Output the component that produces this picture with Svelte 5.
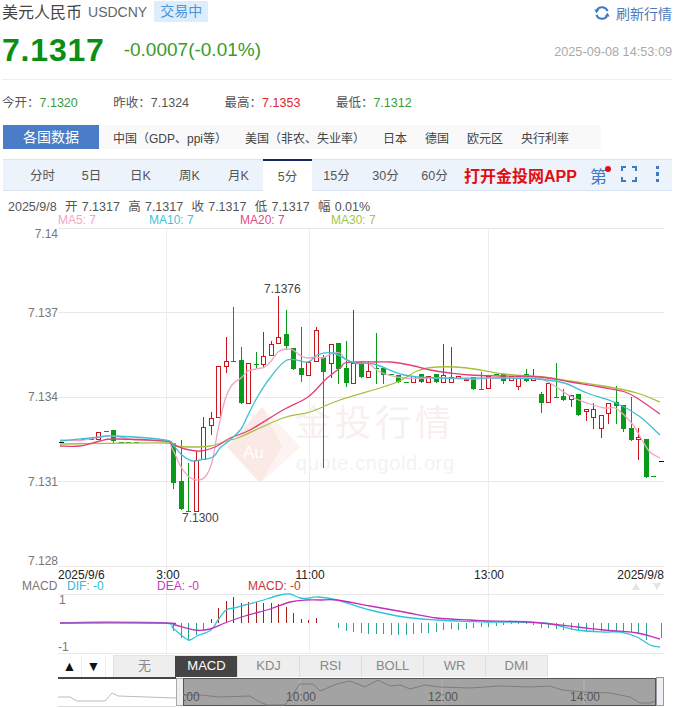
<script lang="ts">
  const stats = [
    { label: '今开', value: '7.1320', tone: 'down' },
    { label: '昨收', value: '7.1324', tone: 'flat' },
    { label: '最高', value: '7.1353', tone: 'up' },
    { label: '最低', value: '7.1312', tone: 'down' }
  ];
  const regions = ['中国（GDP、ppi等）', '美国（非农、失业率）', '日本', '德国', '欧元区', '央行利率'];
  const periods = ['分时', '5日', '日K', '周K', '月K', '5分', '15分', '30分', '60分'];
  const indicators = ['无', 'MACD', 'KDJ', 'RSI', 'BOLL', 'WR', 'DMI'];
  const legend = [
    { text: 'MA5: 7', color: '#f2a5c5' },
    { text: 'MA10: 7', color: '#3fc4dc' },
    { text: 'MA20: 7', color: '#e8488a' },
    { text: 'MA30: 7', color: '#a5c63b' }
  ];

  const barX = (i: number) => Math.round(60.5 + 7.5 * i);

  // [index, kind, body top, body bottom, wick top, wick bottom]
  const bars: [number, string, number, number, number, number][] = [
    [0, 'k', 442, 442, 442, 442], [3, 'd', 439, 439, 439, 439], [4, 'd', 439, 439, 439, 439],
    [5, 'r', 432, 439, 432, 439], [6, 'd', 431, 431, 431, 431], [7, 'g', 430, 441, 430, 442],
    [8, 'd', 442, 442, 442, 442], [9, 'd', 442, 442, 442, 442], [10, 'd', 442, 442, 442, 442],
    [15, 'g', 443, 483, 443, 488], [16, 'g', 481, 509, 440, 509], [17, 'g', 511, 511, 463, 511],
    [18, 'r', 460, 511, 451, 511], [19, 'r', 427, 459, 417, 459], [20, 'r', 418, 425, 412, 434],
    [21, 'r', 366, 417, 366, 417], [22, 'r', 361, 366, 337, 372], [23, 'g', 361, 361, 307, 361],
    [24, 'g', 360, 403, 347, 403], [25, 'r', 363, 403, 363, 403], [26, 'g', 364, 364, 352, 367],
    [27, 'r', 356, 364, 332, 367], [28, 'r', 344, 355, 341, 355], [29, 'r', 337, 343, 296, 343],
    [30, 'g', 334, 346, 310, 349], [31, 'g', 348, 369, 348, 369], [32, 'g', 368, 375, 327, 381],
    [33, 'r', 362, 375, 362, 375], [34, 'r', 330, 361, 327, 361], [35, 'g', 357, 372, 355, 467],
    [36, 'r', 344, 363, 344, 377], [37, 'g', 343, 369, 343, 383], [38, 'g', 368, 383, 341, 386],
    [39, 'r', 363, 383, 310, 383], [40, 'g', 363, 377, 361, 377], [41, 'r', 371, 377, 361, 377],
    [42, 'g', 368, 368, 333, 383], [43, 'g', 368, 375, 368, 383], [44, 'd', 374, 374, 374, 374],
    [45, 'g', 375, 382, 375, 382], [46, 'd', 382, 382, 382, 382], [47, 'r', 376, 382, 376, 382],
    [48, 'g', 374, 382, 374, 382], [49, 'r', 376, 382, 376, 382], [50, 'g', 374, 382, 374, 382],
    [51, 'r', 375, 382, 344, 382], [52, 'r', 377, 382, 347, 382], [53, 'r', 376, 378, 376, 378],
    [54, 'r', 379, 380, 379, 380], [55, 'g', 377, 389, 377, 389], [56, 'g', 389, 389, 372, 389],
    [57, 'r', 376, 388, 376, 388], [58, 'd', 374, 374, 374, 374], [59, 'g', 374, 381, 374, 383],
    [60, 'r', 376, 380, 376, 380], [61, 'r', 376, 386, 376, 389], [62, 'g', 374, 381, 369, 381],
    [63, 'r', 376, 380, 369, 380], [64, 'g', 394, 403, 392, 412], [65, 'r', 383, 402, 383, 402],
    [66, 'g', 397, 397, 363, 397], [67, 'g', 396, 400, 389, 400], [68, 'r', 395, 399, 395, 406],
    [69, 'g', 394, 415, 394, 415], [70, 'r', 409, 411, 409, 420], [71, 'r', 409, 417, 403, 428],
    [72, 'r', 415, 428, 415, 437], [73, 'r', 403, 413, 403, 423], [74, 'g', 402, 406, 386, 423],
    [75, 'g', 405, 429, 405, 431], [76, 'g', 428, 440, 397, 440], [77, 'r', 437, 439, 428, 459],
    [78, 'g', 439, 477, 439, 477], [79, 'g', 476, 476, 476, 476], [80, 'k', 461, 461, 461, 461]
  ];

  const pts = (list: number[][]) => list.map((p) => p.join(',')).join(' ');

  // catmull-rom through the sampled points, the lines in the chart are curved
  function smooth(list: number[][]): string {
    let d = `M${list[0][0]} ${list[0][1]}`;
    for (let i = 0; i < list.length - 1; i++) {
      const a = list[Math.max(i - 1, 0)];
      const b = list[i];
      const c = list[i + 1];
      const e = list[Math.min(i + 2, list.length - 1)];
      const c1 = [b[0] + (c[0] - a[0]) / 6, b[1] + (c[1] - a[1]) / 6];
      const c2 = [c[0] - (e[0] - b[0]) / 6, c[1] - (e[1] - b[1]) / 6];
      d += `C${c1[0].toFixed(1)} ${c1[1].toFixed(1)} ${c2[0].toFixed(1)} ${c2[1].toFixed(1)} ${c[0]} ${c[1]}`;
    }
    return d;
  }

  const ma5 = smooth([[60,440],[80,440.5],[95,438],[105,436],[120,437],[135,440],[165,441],[172,448],[180,465],[188,476],[196,480],[205,477],[212,462],[218,430],[225,400],[232,385],[241,378],[248,371],[256,369],[265,367],[272,360],[278,352],[286,349],[293,350],[301,356],[308,358],[316,357],[323,358],[331,354],[340,353],[346,360],[353,362],[367,362],[380,372],[404,378],[437,378],[470,379],[504,378],[537,378],[550,383],[570,396],[587,403],[604,408],[615,408],[624,415],[634,426],[642,440],[650,452],[660,458]]);
  const ma10 = smooth([[60,441],[100,437],[115,436],[165,440],[173,445],[182,455],[192,461],[200,460],[213,457],[220,448],[230,440],[241,429],[248,415],[258,396],[270,378],[287,360],[308,362],[317,355],[333,353],[354,363],[374,364],[404,375],[437,378],[504,378],[537,379],[564,383],[587,393],[614,402],[639,416],[660,435]]);
  const ma20 = smooth([[60,446],[80,446],[100,441],[115,439],[165,441],[172,444],[185,449],[200,451],[215,447],[230,438],[250,430],[283,410],[308,397],[325,380],[340,368],[345,363],[360,362],[375,362],[391,362],[410,365],[430,370],[450,373],[470,375],[500,376],[540,377],[570,382],[600,387],[625,392],[640,400],[660,414]]);
  const ma30 = smooth([[60,444],[165,443],[175,446],[190,447],[210,446],[230,440],[240,437],[283,418],[310,412],[340,400],[395,383],[417,371],[437,367],[467,368],[504,374],[544,377],[570,381],[604,386],[637,393],[660,402]]);
  const dif = smooth([[60,623],[105,622],[165,623],[173,628],[181,635],[189,640],[197,636],[211,630],[218,620],[226,610],[234,608],[245,605],[260,601],[280,595],[290,594],[300,598],[310,598],[318,597],[337,600],[370,610],[404,617],[437,620],[470,621.5],[487,622],[544,623],[577,630],[604,632],[620,632],[637,637],[650,645],[660,647]]);
  const dea = smooth([[60,623],[165,623],[175,625],[195,630],[210,629],[225,623],[245,616],[270,609],[290,602],[305,600],[320,600],[337,600],[370,606],[404,612],[437,618],[470,620],[487,621],[530,622],[577,627],[604,630],[637,633],[660,639]]);

  // histogram tops (red) and lengths below the zero line (teal)
  const macdUp: [number, number][] = [[20,619],[21,608],[22,601],[23,597],[24,603],[25,602],[26,602],[27,603],[28,603],[29,604],[30,607],[31,613],[32,619],[33,620],[34,618]];
  const macdDown: [number, number][] = [[15,8],[16,15],[17,18],[18,12],[19,7],[37,5],[38,8],[39,9],[40,10],[41,11],[42,11],[43,11],[44,12],[45,12],[46,12],[47,11],[48,10],[49,10],[50,9],[51,7],[52,6],[53,7],[54,6],[55,5],[56,4],[57,4],[58,3],[59,2],[60,1],[61,1],[62,1],[63,2],[64,5],[65,5],[66,6],[67,7],[68,7],[69,8],[70,8],[71,8],[72,8],[73,8],[74,8],[75,9],[76,9],[77,10],[78,17],[80,15]];

  const sliderLeft = pts([[58,696],[70,696],[77,700],[105,700],[112,692],[118,695],[176,697]]);
  const sliderLine = pts([[183,694],[200,694],[220,696],[250,695],[258,700],[267,704],[285,704],[300,683],[313,683],[320,690],[337,683],[350,680],[365,686],[378,679],[390,685],[400,684],[410,688],[425,684],[440,686],[470,687],[500,685],[530,686],[550,685],[562,689],[585,691],[610,692],[630,696],[640,702],[650,702],[655,700]]);

  const grid = [228, 312, 397, 481, 566, 594, 653];
  const axis = [
    { v: '7.14', y: 233 }, { v: '7.137', y: 312 }, { v: '7.134', y: 396 }, { v: '7.131', y: 481 }, { v: '7.128', y: 560 }
  ];
</script>

<div class="page">
  <header class="head">
    <h1>美元人民币</h1>
    <span class="code">USDCNY</span>
    <span class="badge">交易中</span>
    <a class="refresh">
      <svg viewBox="0 0 16 16" width="16" height="16">
        <path d="M13.6 6.2A6 6 0 0 0 2.9 5" fill="none" stroke="#3f78c4" stroke-width="2" />
        <path d="M2.4 9.8A6 6 0 0 0 13.1 11" fill="none" stroke="#3f78c4" stroke-width="2" />
        <path d="M0.4 4.4 5.4 4.4 2.4 8.2ZM15.6 11.6 10.6 11.6 13.6 7.8Z" fill="#3f78c4" />
      </svg>
      刷新行情
    </a>
  </header>

  <section class="quote">
    <strong>7.1317</strong>
    <span class="change">-0.0007(-0.01%)</span>
    <time>2025-09-08 14:53:09</time>
  </section>

  <section class="stats">
    {#each stats as s}
      <span>{s.label}：<b class={s.tone}>{s.value}</b></span>
    {/each}
  </section>

  <nav class="regions">
    <span class="lead">各国数据</span>
    {#each regions as r}
      <span class="region">{r}</span>
    {/each}
  </nav>

  <div class="toolbar">
    <div class="periods">
      {#each periods as p}
        <span class="period" class:active={p === '5分'}>{p}</span>
      {/each}
    </div>
    <span class="promo">打开金投网APP</span>
    <span class="pen">第<i></i></span>
    <svg class="full" viewBox="0 0 16 16" width="16" height="16">
      <path d="M5 1H1V5M11 1H15V5M1 11V15H5M15 11V15H11" fill="none" stroke="#3f78c4" stroke-width="2" />
    </svg>
    <span class="more"><i></i><i></i><i></i></span>
  </div>

  <div class="ohlc">2025/9/8&nbsp; 开 7.1317&nbsp; 高 7.1317&nbsp; 收 7.1317&nbsp; 低 7.1317&nbsp; 幅 0.01%</div>
  <div class="legend">
    {#each legend as l}
      <span style="color: {l.color}">{l.text}</span>
    {/each}
  </div>

  <svg class="chart" viewBox="0 228 677 426" width="677" height="426">
    {#each grid as y}
      <line x1="58" x2="664" y1={y + 0.5} y2={y + 0.5} stroke="#e9e9e9" />
    {/each}
    {#each [166.5, 309.5, 488.5] as x}
      <line x1={x} x2={x} y1="228" y2="654" stroke="#ececec" />
    {/each}

    <g class="mark">
      <path d="M262 407 300 447 260 483 227 447Z" fill="#fae9e5" />
      <path d="M262 407 282 447 260 483 300 447Z" fill="#fdf4f2" />
      <text x="243" y="458" class="au">Au</text>
      <text x="295" y="436" class="cn">金投行情</text>
      <text x="296" y="470" class="url">quote.cngold.org</text>
    </g>

    {#each axis as a}
      <text x="58" y={a.y + 4.5} text-anchor="end" class="tick">{a.v}</text>
    {/each}

    {#each bars as [i, kind, top, bottom, wickTop, wickBottom]}
      {@const x = barX(i)}
      {#if kind === 'd' || kind === 'k'}
        <rect x={x - 2} y={top} width="5" height="1" fill={kind === 'k' ? '#111' : '#0a9a1a'} />
      {:else if kind === 'g'}
        <rect {x} y={wickTop} width="1" height={wickBottom - wickTop + 1} fill="#0a9a1a" />
        <rect x={x - 2} y={top} width="5" height={Math.max(bottom - top, 1)} fill="#0a9a1a" />
      {:else}
        <rect {x} y={wickTop} width="1" height={wickBottom - wickTop + 1} fill="#c9151b" />
        <rect x={x - 1.5} y={top + 0.5} width="4" height={bottom - top} fill="#fff" stroke="#c9151b" />
      {/if}
    {/each}

    <path d={ma5} class="ma" stroke="#f2a5c5" />
    <path d={ma30} class="ma" stroke="#a5c03b" />
    <path d={ma20} class="ma" stroke="#e23e7c" />
    <path d={ma10} class="ma" stroke="#3fbfd4" />

    <text x="264" y="293" class="note">7.1376</text>
    <text x="182" y="522" class="note">7.1300</text>

    <text x="58" y="579" class="date">2025/9/6</text>
    <text x="168" y="579" text-anchor="middle" class="date">3:00</text>
    <text x="310" y="579" text-anchor="middle" class="date">11:00</text>
    <text x="489" y="579" text-anchor="middle" class="date">13:00</text>
    <text x="664" y="579" text-anchor="end" class="date">2025/9/8</text>

    <text x="22" y="590" class="tick">MACD</text>
    <text x="67" y="590" class="tick dif">DIF: -0</text>
    <text x="157" y="590" class="tick dea">DEA: -0</text>
    <text x="248" y="590" class="tick hist">MACD: -0</text>
    <path d="M632 590 636 583 640 590ZM653 583 661 583 657 590Z" fill="#e4e4e4" />
    <text x="59" y="604" class="tick">1</text>
    <text x="58" y="651" class="tick">-1</text>

    {#each macdUp as [i, top]}
      <rect x={barX(i)} y={top} width="1" height={623 - top} fill="#a5201c" />
    {/each}
    {#each macdDown as [i, len]}
      <rect x={barX(i)} y="623" width="1" height={len} fill="#2ba58f" />
    {/each}
    <path d={dif} class="ma" stroke="#2dc5dc" />
    <path d={dea} class="ma" stroke="#c22eb8" />
  </svg>

  <div class="subtabs">
    <div class="arrows"><span>▲</span><span>▼</span></div>
    <div class="indicators">
      {#each indicators as n}
        <span class="indicator" class:on={n === 'MACD'}>{n}</span>
      {/each}
    </div>
  </div>

  <svg class="slider" viewBox="0 676 677 32" width="677" height="32">
    <rect x="58" y="676" width="118" height="2" fill="#444" />
    <line x1="58" x2="176" y1="705.5" y2="705.5" stroke="#ddd" />
    <polyline points={sliderLeft} fill="none" stroke="#bbb" />
    <rect x="176.5" y="677.5" width="7" height="27" fill="#eee" stroke="#aaa" />
    <rect x="183.5" y="677.5" width="472" height="27" fill="#a3a3a3" stroke="#555" />
    <line x1="442" x2="442" y1="678" y2="704" stroke="#b5b5b5" />
    <line x1="584" x2="584" y1="678" y2="704" stroke="#b5b5b5" />
    <line x1="300" x2="300" y1="678" y2="704" stroke="#b5b5b5" />
    <polyline points={sliderLine} fill="none" stroke="#7d7d7d" />
    <text x="183" y="700" class="stamp">:00</text>
    <text x="286" y="700" class="stamp">10:00</text>
    <text x="428" y="700" class="stamp">12:00</text>
    <text x="570" y="700" class="stamp">14:00</text>
    <rect x="656.5" y="676.5" width="7" height="28" fill="#eeeef4" stroke="#999" />
  </svg>
</div>

<style>
  :global(body) {
    margin: 0;
    background: #fff;
  }
  .page {
    width: 677px;
    height: 708px;
    overflow: hidden;
    font-family: "Liberation Sans", "Noto Sans CJK SC", sans-serif;
    color: #555;
  }
  .head {
    display: flex;
    align-items: center;
    height: 23px;
    padding: 0 5px 0 2px;
  }
  h1 {
    margin: 0 0 2px;
    font-size: 16px;
    font-weight: 400;
    color: #444;
  }
  .code {
    margin-left: 6px;
    font-size: 14px;
    color: #666;
  }
  .badge {
    margin-left: 7px;
    padding: 0 6px;
    height: 21px;
    line-height: 21px;
    font-size: 14px;
    color: #4a94d8;
    background: #dcedfb;
  }
  .refresh {
    margin-left: auto;
    display: flex;
    align-items: center;
    gap: 6px;
    padding-top: 2px;
    font-size: 14px;
    color: #4f79bd;
  }
  .quote {
    display: flex;
    align-items: center;
    height: 56px;
    margin: 0 5px 0 2px;
    border-bottom: 1px solid #eee;
    box-sizing: content-box;
  }
  .quote strong {
    font-size: 32px;
    color: #0a8f14;
    letter-spacing: 0.8px;
    margin-top: -2px;
  }
  .change {
    margin-left: 19px;
    font-size: 19px;
    color: #3c9a2c;
    margin-top: -2px;
  }
  .quote time {
    margin-left: auto;
    font-size: 12.7px;
    color: #aaa;
    margin-top: 2px;
  }
  .stats {
    display: grid;
    grid-template-columns: repeat(4, 111.3px);
    padding: 15px 0 0 2px;
    height: 31px;
    box-sizing: border-box;
    font-size: 12.5px;
    line-height: 17px;
    color: #555;
  }
  .stats b {
    font-weight: 400;
  }
  .down { color: #3b9a3c; }
  .up { color: #e0242c; }
  .regions {
    display: flex;
    align-items: center;
    width: 598px;
    height: 24px;
    margin: 14px 0 10px 3px;
    background: #f9f9f9;
    font-size: 12px;
    color: #444;
  }
  .lead {
    flex: none;
    width: 96px;
    line-height: 24px;
    margin-right: 14px;
    text-align: center;
    font-size: 14px;
    color: #fff;
    background: #4a7cc7;
  }
  .region {
    margin-right: 18px;
    white-space: nowrap;
  }
  .toolbar {
    display: flex;
    align-items: center;
    height: 32px;
    box-sizing: border-box;
    margin: 0 5px 0 3px;
    padding-left: 15px;
    background: #edf3fb;
    border-top: 1px solid #d9e4f2;
    border-bottom: 1px solid #d9e4f2;
  }
  .periods {
    display: flex;
    align-self: stretch;
    margin-top: -1px;
    margin-bottom: -1px;
  }
  .period {
    width: 49px;
    line-height: 33px;
    padding-top: 1px;
    text-align: center;
    font-size: 12.5px;
    color: #555;
  }
  .period.active {
    background: #fff;
    border-top: 2px solid #14265f;
    padding-top: 0;
    box-sizing: border-box;
  }
  .promo {
    margin: -1px 0 0 5px;
    font-size: 16px;
    font-weight: 700;
    color: #e30d14;
    white-space: nowrap;
  }
  .pen {
    position: relative;
    margin-left: 13px;
    font-size: 17px;
    color: #3f78c4;
  }
  .pen i {
    position: absolute;
    right: -4px;
    top: 3px;
    width: 6px;
    height: 6px;
    border-radius: 50%;
    background: #e30d14;
  }
  .full {
    margin: -2px 0 0 14px;
  }
  .more {
    display: flex;
    flex-direction: column;
    gap: 3px;
    margin: -2px 0 0 19px;
  }
  .more i {
    width: 3.5px;
    height: 3.5px;
    background: #3f78c4;
  }
  .ohlc {
    padding: 9px 0 0 8px;
    height: 22px;
    box-sizing: border-box;
    font-size: 12.5px;
    word-spacing: 0.7px;
    line-height: 15px;
    color: #555;
    white-space: nowrap;
  }
  .legend {
    display: grid;
    grid-template-columns: repeat(4, 91px);
    height: 15px;
    padding: 1px 0 0 58px;
    box-sizing: border-box;
    font-size: 12px;
    line-height: 13px;
  }
  .chart, .slider {
    display: block;
  }
  .ma {
    fill: none;
    stroke-width: 1.3;
    stroke-linejoin: round;
  }
  .tick {
    font-size: 12px;
    fill: #777;
  }
  .tick.dif { fill: #2fbcd8; }
  .tick.dea { fill: #c23cc0; }
  .tick.hist { fill: #c8323c; }
  .note {
    font-size: 12px;
    fill: #444;
  }
  .date {
    font-size: 12px;
    fill: #222;
  }
  .au {
    font-size: 17px;
    fill: #fff;
  }
  .cn {
    font-size: 36px;
    letter-spacing: 4px;
    fill: #f8f0ee;
  }
  .url {
    font-size: 20px;
    letter-spacing: 0.6px;
    fill: #f3f3f3;
  }
  .stamp {
    font-size: 12px;
    fill: #555;
  }
  .subtabs {
    display: flex;
    height: 22px;
    margin-top: 1px;
    padding-left: 58px;
    background: #fff;
  }
  .arrows {
    display: flex;
    width: 55px;
  }
  .arrows span {
    width: 23px;
    text-align: center;
    font-size: 14px;
    line-height: 22px;
    color: #111;
    border-right: 1px solid #eee;
  }
  .indicators {
    display: flex;
    border-top: 1px solid #e3e3e3;
    border-right: 1px solid #ddd;
    box-sizing: border-box;
  }
  .indicator {
    width: 62px;
    box-sizing: border-box;
    text-align: center;
    font-size: 13px;
    line-height: 20px;
    color: #888;
    background: #eee;
    border-left: 1px solid #ddd;
  }
  .indicator.on {
    color: #fff;
    background: #444;
    border-left-color: #444;
  }
</style>
